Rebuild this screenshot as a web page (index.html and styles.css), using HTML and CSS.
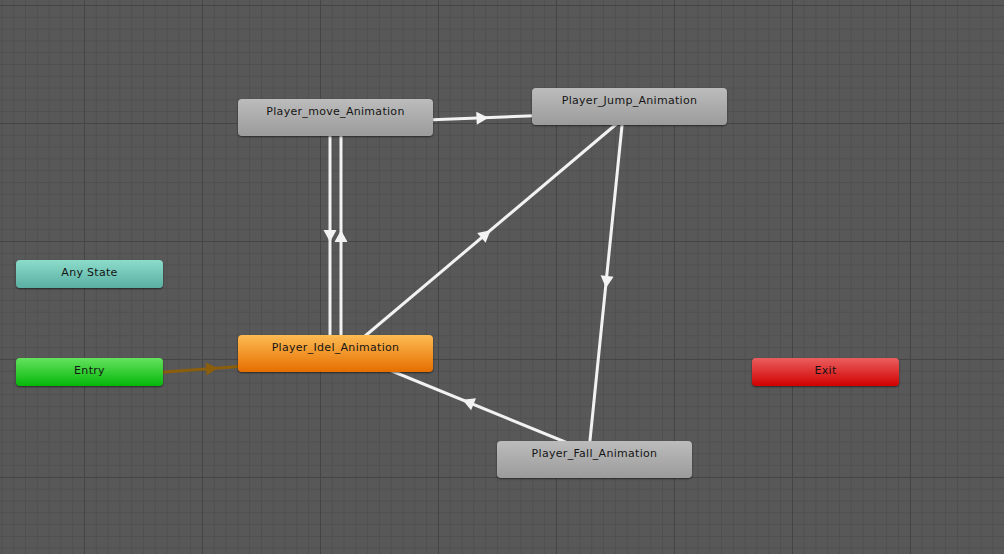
FILE: index.html
```html
<!DOCTYPE html>
<html lang="en">
<head>
  <meta charset="UTF-8" />
  <title>Animator</title>
  <link rel="stylesheet" href="styles.css">
</head>
<body>

  <div class="graph">

    <!-- transitions, drawn centre to centre under the states -->
    <svg class="links" width="1004" height="554" viewBox="0 0 1004 554">
      <defs>
        <polygon id="arrow" points="6,0 -6,-6.5 -6,6.5" />
      </defs>

      <g class="link">
        <line x1="330" y1="118" x2="330" y2="354" />
        <use href="#arrow" transform="translate(330 236) rotate(90)" />
      </g>
      <g class="link">
        <line x1="341" y1="354" x2="341" y2="118" />
        <use href="#arrow" transform="translate(341 236) rotate(-90)" />
      </g>
      <g class="link">
        <line x1="335.5" y1="123.5" x2="630" y2="112" />
        <use href="#arrow" transform="translate(482.5 118) rotate(-2.2)" />
      </g>
      <g class="link">
        <line x1="339" y1="358" x2="633" y2="110" />
        <use href="#arrow" transform="translate(486 234) rotate(-40.2)" />
      </g>
      <g class="link">
        <line x1="624" y1="106" x2="588" y2="460" />
        <use href="#arrow" transform="translate(606.5 282) rotate(95.8)" />
      </g>
      <g class="link">
        <line x1="597" y1="455" x2="338" y2="349" />
        <use href="#arrow" transform="translate(468 402) rotate(-157.7)" />
      </g>
      <g class="link entry-link">
        <line x1="90" y1="377.5" x2="336" y2="359.5" />
        <use href="#arrow" transform="translate(212 368.5) rotate(-4.2)" />
      </g>
    </svg>

    <div class="state state-big" style="left: 238px; top: 99px;">Player_move_Animation</div>
    <div class="state state-big" style="left: 532px; top: 88px;">Player_Jump_Animation</div>
    <div class="state state-big default" style="left: 238px; top: 335px;">Player_Idel_Animation</div>
    <div class="state state-big" style="left: 497px; top: 441px;">Player_Fall_Animation</div>

    <div class="state state-small any" style="left: 16px; top: 260px;">Any State</div>
    <div class="state state-small entry" style="left: 16px; top: 358px;">Entry</div>
    <div class="state state-small exit" style="left: 752px; top: 358px;">Exit</div>

  </div>

</body>
</html>
```

FILE: styles.css
```css
body {
  margin: 0;
  overflow: hidden;
  font-family: "DejaVu Sans", Verdana, sans-serif;
}

.graph {
  position: relative;
  width: 1004px;
  height: 554px;
  overflow: hidden;
  background-color: #585858;
  background-image:
    linear-gradient(to right, #454545 1px, transparent 1px),
    linear-gradient(to bottom, #454545 1px, transparent 1px),
    linear-gradient(to right, #505050 1px, transparent 1px),
    linear-gradient(to bottom, #505050 1px, transparent 1px);
  background-size: 118px 118px, 118px 118px, 11.8px 11.8px, 11.8px 11.8px;
  background-position: 84px 5px;
}

.links {
  position: absolute;
  left: 0;
  top: 0;
}

.link line {
  stroke: #f2f2f2;
  stroke-width: 3;
}

.link use {
  fill: #f2f2f2;
}

.entry-link line {
  stroke: #8a5e0c;
}

.entry-link use {
  fill: #8a5e0c;
}

.state {
  position: absolute;
  box-sizing: border-box;
  padding-top: 6px;
  border-radius: 4px;
  font-size: 11px;
  line-height: 14px;
  letter-spacing: 0.3px;
  text-align: center;
  color: #151515;
  box-shadow: 0 1px 2px rgba(0, 0, 0, 0.55);
  background: linear-gradient(to bottom, #bcbcbc, #9b9b9b);
}

.state-big {
  width: 195px;
  height: 37px;
}

.state-small {
  width: 147px;
  height: 28px;
}

.default {
  background: linear-gradient(to bottom, #fcbb52, #e66e00);
}

.any {
  background: linear-gradient(to bottom, #8cdcca, #5aafa3);
}

.entry {
  background: linear-gradient(to bottom, #64e35e, #05b70a);
}

.exit {
  background: linear-gradient(to bottom, #ea5e5e, #d10000);
}
```
